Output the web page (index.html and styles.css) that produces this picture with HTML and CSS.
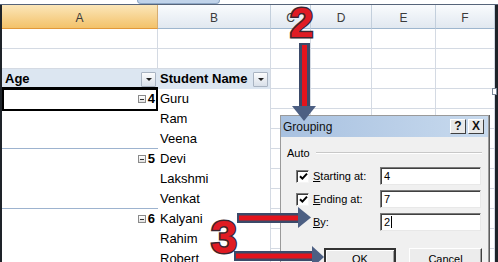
FILE: index.html
```html
<!DOCTYPE html>
<html>
<head>
<meta charset="utf-8">
<link rel="stylesheet" href="styles.css">
</head>
<body>
<div class="topbar"><div class="tab"></div></div>
<div class="sheet">
  <div class="h on">A</div><div class="h">B</div><div class="h">C</div><div class="h">D</div><div class="h">E</div><div class="h">F</div>

  <div class="g"></div><div class="g"></div><div class="g"></div><div class="g"></div><div class="g"></div><div class="g"></div>
  <div class="g"></div><div class="g"></div><div class="g"></div><div class="g"></div><div class="g"></div><div class="g"></div>

  <div class="lbl"><span>Age</span><span class="dd"></span></div>
  <div class="lbl rb"><span>Student Name</span><span class="dd"></span></div>
  <div class="g"></div><div class="g"></div><div class="g"></div><div class="g"></div>

  <div class="pa sel"><span class="mbox"></span>4</div><div class="pb">Guru</div>
  <div class="g"></div><div class="g"></div><div class="g"></div><div class="g"></div>

  <div class="pa"></div><div class="pb">Ram</div>
  <div class="g"></div><div class="g"></div><div class="g"></div><div class="g"></div>

  <div class="pa sep"></div><div class="pb">Veena</div>
  <div class="g"></div><div class="g"></div><div class="g"></div><div class="g"></div>

  <div class="pa"><span class="mbox"></span>5</div><div class="pb">Devi</div>
  <div class="g"></div><div class="g"></div><div class="g"></div><div class="g"></div>

  <div class="pa"></div><div class="pb">Lakshmi</div>
  <div class="g"></div><div class="g"></div><div class="g"></div><div class="g"></div>

  <div class="pa sep"></div><div class="pb">Venkat</div>
  <div class="g"></div><div class="g"></div><div class="g"></div><div class="g"></div>

  <div class="pa"><span class="mbox"></span>6</div><div class="pb">Kalyani</div>
  <div class="g"></div><div class="g"></div><div class="g"></div><div class="g"></div>

  <div class="pa"></div><div class="pb">Rahim</div>
  <div class="g"></div><div class="g"></div><div class="g"></div><div class="g"></div>

  <div class="pa"></div><div class="pb">Robert</div>
  <div class="g"></div><div class="g"></div><div class="g"></div><div class="g"></div>
</div>

<div class="handle"></div>

<div class="dlg">
  <div class="title">
    <span>Grouping</span>
    <span class="cap first">?</span>
    <span class="cap">X</span>
  </div>
  <div class="body">
    <div class="auto">Auto</div>
    <div class="fields">
      <div class="lab"><span class="cb"><svg width="9" height="9" viewBox="0 0 9 9"><path d="M1 4.2 L3.4 6.6 L8 1.6" fill="none" stroke="#000" stroke-width="2"/></svg></span><span><u>S</u>tarting at:</span></div>
      <div class="inp">4</div>
      <div class="lab"><span class="cb"><svg width="9" height="9" viewBox="0 0 9 9"><path d="M1 4.2 L3.4 6.6 L8 1.6" fill="none" stroke="#000" stroke-width="2"/></svg></span><span><u>E</u>nding at:</span></div>
      <div class="inp">7</div>
      <div class="lab by"><span><u>B</u>y:</span></div>
      <div class="inp">2<span class="caret"></span></div>
    </div>
    <div class="btns">
      <div class="btn def">OK</div>
      <div class="btn">Cancel</div>
    </div>
  </div>
</div>

<svg class="arrows" width="498" height="262" viewBox="0 0 498 262">
  <rect x="299" y="43" width="11" height="64" fill="#3b4a69"/>
  <rect x="302" y="45" width="5" height="62" fill="#e3141d"/>
  <polygon points="292,106 316,106 304,121" fill="#4c5f83"/>

  <rect x="237" y="213" width="62" height="10" fill="#3b4a69"/>
  <rect x="239" y="215.5" width="60" height="5" fill="#e3141d"/>
  <polygon points="298,207 298,228 311,217.5" fill="#4c5f83"/>

  <rect x="234" y="251" width="80" height="10" fill="#3b4a69"/>
  <rect x="236" y="253.5" width="78" height="5" fill="#e3141d"/>
  <polygon points="312,246 312,268 324,257" fill="#4c5f83"/>
</svg>

<span class="num n2">2</span>
<span class="num n3">3</span>
</body>
</html>
```

FILE: styles.css
```css
* { box-sizing: border-box; }
html, body { margin: 0; padding: 0; }
body {
  width: 498px;
  height: 262px;
  overflow: hidden;
  position: relative;
  background: #fff;
  font-family: "Liberation Sans", Arial, sans-serif;
}

.topbar {
  height: 5px;
  border-bottom: 1px solid #56647a;
  background: #fff;
}
.tab {
  margin-left: 137px;
  width: 83px;
  height: 4px;
  background: #c0d3ea;
  border: 1px solid #8ea7c5;
  border-top: none;
  border-radius: 0 0 8px 8px;
}

.sheet {
  display: grid;
  grid-template-columns: 156px 113px 40px 61px 64px 59px;
  grid-template-rows: 24px repeat(12, 20px);
  border-left: 2px solid #1e2329;
  border-right: 3px solid #1e2329;
  font-size: 13px;
  color: #000;
}

.h {
  padding-top: 4px;
  line-height: 19px;
  text-align: center;
  font-size: 12px;
  color: #3b3b3b;
  background: linear-gradient(#f9fbfd, #e1e8f0);
  border-right: 1px solid #c3cfdc;
  border-bottom: 1px solid #9eb6ce;
}
.h.on {
  background: linear-gradient(#fbe6b9, #f3c26a);
  border-bottom-color: #e1983a;
  border-right-color: #d6ad72;
}

.g {
  border-right: 1px solid #d4dae3;
  border-bottom: 1px solid #d4dae3;
}

.lbl {
  background: #dce6f1;
  font-weight: bold;
  line-height: 20px;
  display: flex;
  align-items: center;
  justify-content: space-between;
  padding: 0 2px 0 3px;
}
.rb { border-right: 1px solid #d4dae3; padding-left: 2px; }

.dd {
  width: 15px;
  height: 15px;
  border: 1px solid #a9b4c2;
  border-radius: 1px;
  background: linear-gradient(#fbfcfd, #d9e0e9);
  display: flex;
  align-items: center;
  justify-content: center;
}
.dd::after {
  content: "";
  border-left: 3px solid transparent;
  border-right: 3px solid transparent;
  border-top: 3px solid #222;
  margin-top: 1px;
}

.pa {
  position: relative;
  display: flex;
  align-items: center;
  justify-content: flex-end;
  gap: 2px;
  padding-right: 3px;
  font-weight: bold;
  line-height: 20px;
}
.sep { border-bottom: 1px solid #9db3cf; }
.sel::after {
  content: "";
  position: absolute;
  left: 0;
  right: 0;
  top: -2px;
  bottom: -2px;
  border: 2px solid #000;
  border-top-width: 3px;
}
.mbox {
  width: 8px;
  height: 8px;
  border: 1px solid #8a8a8a;
  background: linear-gradient(#fff, #e2e2e2);
  display: flex;
  align-items: center;
  justify-content: center;
}
.mbox::after {
  content: "";
  width: 4px;
  height: 1px;
  background: #333;
}

.pb {
  padding-left: 2px;
  line-height: 20px;
  border-right: 1px solid #d4dae3;
}

.handle {
  position: absolute;
  left: 492px;
  top: 88px;
  width: 5px;
  height: 7px;
  background: #fff;
  border: 1px solid #7d8a99;
}

/* dialog */
.dlg {
  position: absolute;
  left: 280px;
  top: 115px;
  width: 209px;
  height: 170px;
  background: #f0f0f0;
  border: 1px solid #9a9a9a;
  box-shadow: 1px 0 0 #5e5e5e;
  font-size: 11px;
  color: #000;
}
.title {
  height: 21px;
  display: flex;
  align-items: center;
  padding: 0 4px 0 2px;
  background: linear-gradient(90deg, #a8c1e0, #c8daee);
  font-size: 12px;
  color: #111;
}
.cap {
  width: 16px;
  height: 15px;
  margin-left: 2px;
  background: #e9e9e9;
  border: 1px solid;
  border-color: #fff #404040 #404040 #fff;
  font-weight: bold;
  font-size: 12px;
  line-height: 13px;
  text-align: center;
}
.cap.first { margin-left: auto; }

.body { padding: 9px 6px 0 6px; }
.auto {
  display: flex;
  align-items: center;
  gap: 6px;
  height: 14px;
  line-height: 14px;
}
.auto::after {
  content: "";
  flex: 1;
  border-top: 1px solid #c8c8c8;
  border-bottom: 1px solid #fff;
}
.fields {
  margin: 7px 0 0 9px;
  display: grid;
  grid-template-columns: 84px 101px;
  grid-auto-rows: 18px;
  row-gap: 5px;
}
.lab {
  display: flex;
  align-items: center;
  gap: 4px;
}
.lab.by { padding-left: 17px; }
.cb {
  width: 13px;
  height: 13px;
  background: #fff;
  border: 1px solid;
  border-color: #7d7d7d #f5f5f5 #f5f5f5 #7d7d7d;
  box-shadow: inset 1px 1px 0 #3a3a3a;
  display: flex;
  align-items: center;
  justify-content: center;
  padding: 1px 0 0 1px;
}
.cb svg { display: block; }
.inp {
  background: #fff;
  border: 1px solid;
  border-color: #7a7a7a #e8e8e8 #e8e8e8 #7a7a7a;
  box-shadow: inset 1px 1px 0 #404040;
  padding-left: 3px;
  line-height: 16px;
  display: flex;
  align-items: center;
}
.caret {
  width: 1px;
  height: 12px;
  background: #000;
  margin-left: 1px;
}
.btns {
  margin-top: 17px;
  display: flex;
  justify-content: flex-end;
  gap: 13px;
}
.btn {
  height: 23px;
  width: 73px;
  background: #ececec;
  border: 1px solid;
  border-color: #fff #404040 #404040 #fff;
  box-shadow: inset -1px -1px 0 #a0a0a0;
  text-align: center;
  line-height: 20px;
}
.btn.def {
  width: 72px;
  border: 2px solid #333;
  box-shadow: inset 1px 1px 0 #fff, inset -1px -1px 0 #a0a0a0;
  line-height: 18px;
}

/* annotations */
.arrows {
  position: absolute;
  left: 0;
  top: 0;
}
.num {
  position: absolute;
  font-family: "Liberation Sans", Arial, sans-serif;
  font-weight: bold;
  line-height: 1;
  color: #e01b23;
  -webkit-text-stroke: 3px #3d2630;
  paint-order: stroke fill;
}
.n2 { left: 290px; top: 2px; font-size: 42px; }
.n3 { left: 211px; top: 213px; font-size: 47px; }
```
